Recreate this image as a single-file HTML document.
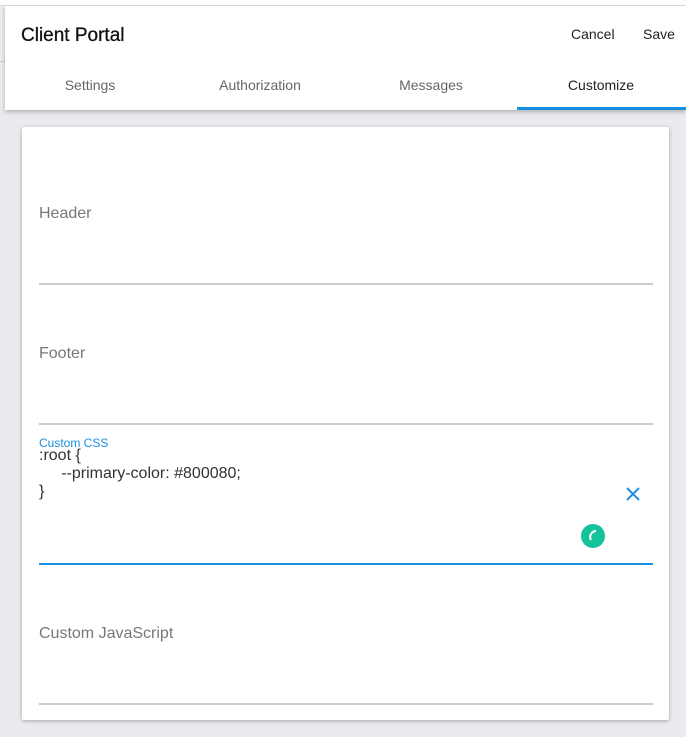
<!DOCTYPE html>
<html><head><style>
body{margin:0;width:686px;height:737px;background:#e9ebee;position:relative;overflow:hidden;font-family:"Liberation Sans",sans-serif;}
.top{position:absolute;left:0;top:0;width:686px;height:5px;background:#fff;border-bottom:1px solid #ddd;}
.hdr{position:absolute;left:5px;top:6px;width:681px;height:104px;background:#fff;box-shadow:0 2px 4px rgba(0,0,0,.25);}
.title{position:absolute;left:16px;top:19px;font-size:19px;color:#111;-webkit-text-stroke:0.3px #111;}
.btn{position:absolute;top:20px;font-size:14px;color:#222;}
.tab{position:absolute;top:71px;font-size:14px;color:#666;width:170px;text-align:center;}
.ind{position:absolute;left:512px;top:101px;width:169px;height:3px;background:#1a8ee0;}
.card{position:absolute;left:22px;top:127px;width:647px;height:593px;background:#fff;box-shadow:0 1px 4px rgba(0,0,0,.3);border-radius:2px;}
.lbl{position:absolute;left:17px;font-size:16px;color:#777;}
.line{position:absolute;left:17px;width:614px;height:2px;background:#ccc;}
</style></head><body>
<div class="top"></div>
<div style="position:absolute;left:0;top:61px;width:5px;height:1px;background:#ccc"></div>
<div class="hdr">
<div class="title">Client Portal</div>
<div class="btn" style="left:566px">Cancel</div>
<div class="btn" style="left:638px">Save</div>
<div class="tab" style="left:0">Settings</div>
<div class="tab" style="left:170px">Authorization</div>
<div class="tab" style="left:341px">Messages</div>
<div class="tab" style="left:511px;color:#222">Customize</div>
<div class="ind"></div>
</div>
<div class="card">
<div class="lbl" style="top:78px">Header</div>
<div class="line" style="top:156px"></div>
<div class="lbl" style="top:218px">Footer</div>
<div class="line" style="top:296px"></div>
<div style="position:absolute;left:17px;top:309px;font-size:12px;color:#1a8ee0">Custom CSS</div>
<div style="position:absolute;left:17px;top:320px;font-size:16px;line-height:18px;color:#333;white-space:pre">:root {
     --primary-color: #800080;
}</div>
<svg style="position:absolute;left:604px;top:360px" width="14" height="14"><path d="M1 1L13 13M13 1L1 13" stroke="#1a8ee0" stroke-width="2"/></svg>
<svg style="position:absolute;left:559px;top:397px" width="24" height="24"><circle cx="12" cy="12" r="12" fill="#15c39a"/><path d="M15 7A6 6 0 0 0 10 16" stroke="#fff" stroke-width="2" fill="none"/></svg>
<div class="line" style="top:436px;background:#1a8ee0"></div>
<div class="lbl" style="top:498px">Custom JavaScript</div>
<div class="line" style="top:576px"></div>
</div>
</body></html>
